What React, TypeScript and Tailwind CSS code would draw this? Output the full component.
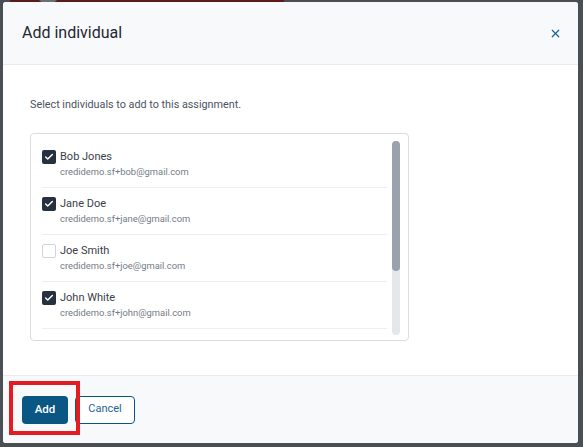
import { X, Check } from 'lucide-react';

const people = [
    { name: 'Bob Jones', email: 'credidemo.sf+bob@gmail.com', checked: true },
    { name: 'Jane Doe', email: 'credidemo.sf+jane@gmail.com', checked: true },
    { name: 'Joe Smith', email: 'credidemo.sf+joe@gmail.com', checked: false },
    { name: 'John White', email: 'credidemo.sf+john@gmail.com', checked: true },
];

export default function App() {
    return (
        <div
            className="relative w-[583px] h-[447px] overflow-hidden bg-[#4a4f54]"
            style={{ fontFamily: 'Roboto, "Liberation Sans", sans-serif' }}
        >
            {/* Page behind the backdrop */}
            <div className="absolute left-[10px] top-0 w-[274px] h-[3px] bg-[#5b1a1c]"></div>
            <div className="absolute left-[36px] top-[-20px] w-[24px] h-[24px] rounded-full bg-[#6b6f73]"></div>

            {/* Modal */}
            <div className="absolute left-[3px] top-[2px] w-[575px] h-[441px] flex flex-col bg-white rounded-[3px] overflow-hidden">
                {/* Header */}
                <div className="h-[63px] shrink-0 flex items-center justify-between pl-[19px] pr-[16px] bg-[#f8f9fb] border-b border-[#e8eaed]">
                    <h2 className="text-[16px] font-normal text-[#1f2733]">Add individual</h2>
                    <X size={13} strokeWidth={2.2} className="text-[#1c6597]" />
                </div>

                {/* Body */}
                <div className="flex-1 px-[27px] pt-[33px]">
                    <p className="text-[10.8px] text-[#4b5361] leading-[14px]">Select individuals to add to this assignment.</p>

                    <div className="mt-[21px] w-[379px] h-[208px] border border-[#d9dce1] rounded-[4px] flex overflow-hidden">
                        <div className="flex-1 overflow-hidden pl-[11px] pt-[7px]">
                            {people.map((p) => (
                                <div key={p.name} className="flex items-start gap-[4px] pt-[8px] pb-[8px] border-b border-[#eceef1]">
                                    {p.checked ? (
                                        <div className="mt-[1px] w-[14px] h-[14px] rounded-[2px] bg-[#27303f] flex items-center justify-center">
                                            <Check size={10} strokeWidth={3.5} className="text-white" />
                                        </div>
                                    ) : (
                                        <div className="mt-[1px] w-[14px] h-[14px] rounded-[2px] border border-[#d1d5db] bg-white"></div>
                                    )}
                                    <div>
                                        <div className="text-[11px] leading-[16px] text-[#3a404a]">{p.name}</div>
                                        <div className="text-[9.4px] leading-[14px] text-[#747b86]">{p.email}</div>
                                    </div>
                                </div>
                            ))}
                        </div>
                        {/* Scrollbar */}
                        <div className="w-[8px] ml-[5px] mr-[8px] mt-[7px] mb-[5px] rounded-full bg-[#e5e7eb]">
                            <div className="w-full h-[130px] rounded-full bg-[#9aa2ad]"></div>
                        </div>
                    </div>
                </div>

                {/* Footer */}
                <div className="h-[68px] shrink-0 flex items-center gap-[7px] pl-[19px] bg-[#f8f9fb] border-t border-[#e8eaed]">
                    <button className="w-[46px] h-[28px] rounded-[4px] bg-[#0b5784] text-white text-[11.5px] font-medium">Add</button>
                    <button className="w-[60px] h-[28px] rounded-[4px] border border-[#0b5784] bg-white text-[#1c6597] text-[11px]">Cancel</button>
                </div>
            </div>

            {/* Highlight annotation */}
            <div className="absolute left-[9px] top-[381px] w-[71px] h-[54px] border-[4px] border-[#e31b23]"></div>
        </div>
    );
}
